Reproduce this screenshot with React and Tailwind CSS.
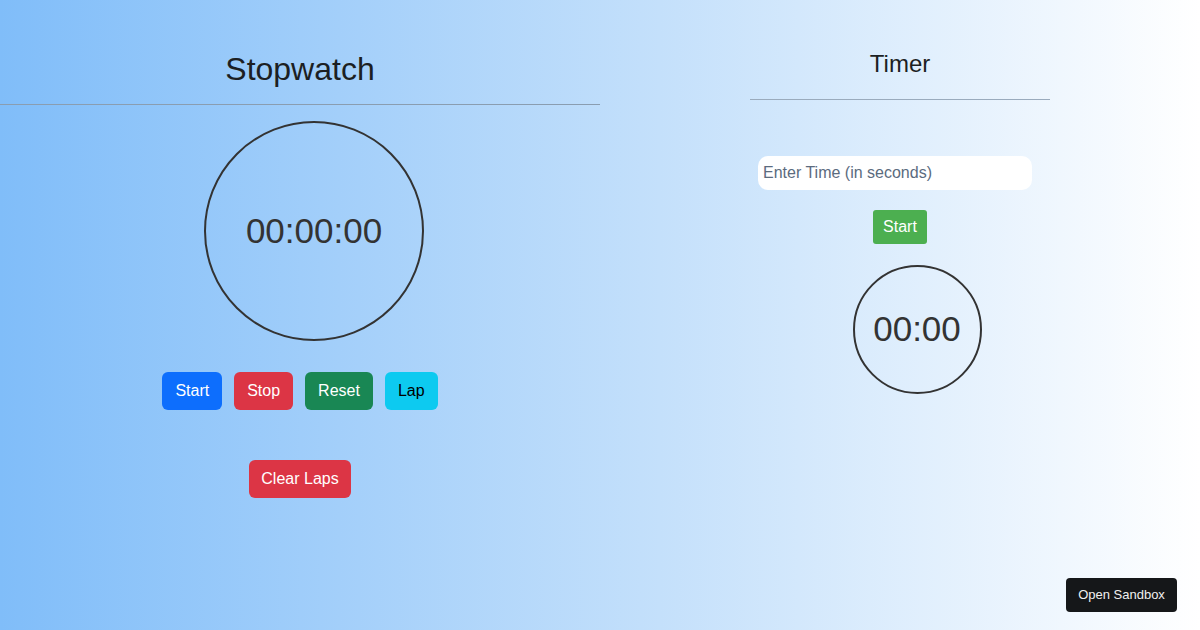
export default function App() {
  const font = { fontFamily: '"Liberation Sans", Arial, sans-serif' };
  return (
    <div
      className="relative w-full h-[630px] flex overflow-hidden bg-[linear-gradient(to_right,#80bdf9,#c4e0fb_55%,#ffffff)]"
      style={font}
    >
      <div className="w-[600px] flex flex-col items-center">
        <h1 className="mt-[50px] text-[32px] leading-[38px] text-[#1c1f23]">Stopwatch</h1>
        <div className="mt-[16px] w-[600px] h-px bg-[#8a9db0]" />
        <div className="mt-[16px] ml-[28px] w-[220px] h-[220px] rounded-full border-2 border-[#333] flex items-center justify-center">
          <span className="text-[35px] text-[#333]">00:00:00</span>
        </div>
        <div className="mt-[31px] flex gap-[12px]">
          <button className="h-[38px] px-[13px] text-[16px] text-white bg-[#0d6efd] rounded-md">Start</button>
          <button className="h-[38px] px-[13px] text-[16px] text-white bg-[#dc3545] rounded-md">Stop</button>
          <button className="h-[38px] px-[13px] text-[16px] text-white bg-[#198754] rounded-md">Reset</button>
          <button className="h-[38px] px-[13px] text-[16px] text-black bg-[#0dcaf0] rounded-md">Lap</button>
        </div>
        <button className="mt-[50px] h-[38px] px-[12px] text-[16px] text-white bg-[#dc3545] rounded-md">Clear Laps</button>
      </div>
      <div className="w-[600px] flex flex-col items-center">
        <h2 className="mt-[50px] text-[24px] leading-[28px] text-[#1c1f23]">Timer</h2>
        <div className="mt-[21px] w-[300px] h-px bg-[#9aabbd]" />
        <input
          className="mt-[56px] mr-[10px] w-[274px] h-[34px] bg-white rounded-[10px] pl-[5px] text-[16px] outline-none placeholder:text-[#5b6b7e]"
          placeholder="Enter Time (in seconds)"
          style={font}
        />
        <button className="mt-[20px] h-[34px] px-[10px] text-[16px] text-white bg-[#4caf50] rounded-[3px]">Start</button>
        <div className="mt-[21px] ml-[34px] w-[129px] h-[129px] rounded-full border-2 border-[#333] flex items-center justify-center">
          <span className="text-[35px] text-[#333]">00:00</span>
        </div>
      </div>
      <button className="absolute right-[23px] bottom-[18px] w-[111px] h-[34px] rounded-[4px] bg-[#151719] text-[13px] text-[#f0f0f0]">
        Open Sandbox
      </button>
    </div>
  );
}
